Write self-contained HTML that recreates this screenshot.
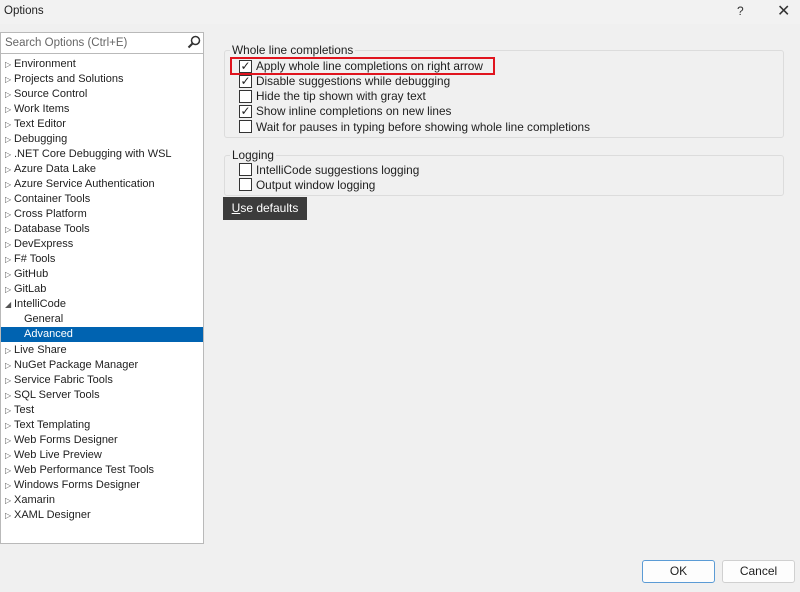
<!DOCTYPE html>
<html><head><style>
*{margin:0;padding:0;box-sizing:border-box}
body{width:800px;height:592px;background:#f0f0f0;font-family:"Liberation Sans",sans-serif;font-size:11.5px;color:#1e1e1e;position:relative;overflow:hidden}
.a{position:absolute;white-space:nowrap}
.title{left:0;top:0;width:800px;height:24px;background:#f2f2f2}
.tree{left:0;top:53px;width:204px;height:491px;background:#fff;border:1px solid #b9b9b9;font-size:11px}
.item{position:absolute;left:4px;height:15px;line-height:15px;top:1px}
.item i{font-style:normal;font-size:8px;color:#555;display:inline-block;width:9px}
.sel{position:absolute;left:0;width:202px;height:15px;background:#0063b1}
.cb{position:absolute;width:13px;height:13px;border:1px solid #333;background:#fff;font-size:12px;line-height:11px;text-align:center}
.grp{position:absolute;border:1px solid #dcdcdc;border-radius:3px}
.btn{position:absolute;height:23px;background:#fdfdfd;border:1px solid #d0d0d0;border-radius:3px;text-align:center;line-height:21px;font-size:12px}
.t{font-size:11.8px}
</style></head><body>
<div class="a title"></div>
<div class="a" style="left:4px;top:5px;font-size:11.5px">Options</div>
<div class="a" style="left:737px;top:4px;font-size:12px;color:#333">?</div>
<div class="a" style="left:777px;top:1px;font-size:16px;color:#333">✕</div>
<div class="a" style="left:0;top:32px;width:204px;height:22px;background:#fff;border:1px solid #b9b9b9"></div>
<div class="a" style="left:5px;top:37px;color:#666;font-size:11.5px">Search Options (Ctrl+E)</div>
<svg class="a" style="left:187px;top:35px" width="14" height="14"><circle cx="8.5" cy="5.5" r="4" fill="none" stroke="#333" stroke-width="1.5"/><line x1="5.5" y1="8.5" x2="1.5" y2="12.5" stroke="#333" stroke-width="2"/></svg>
<div class="a tree">
<div class="sel" style="top:273px"></div>
<div class="item" style="top:3px"><i>▷</i>Environment</div>
<div class="item" style="top:18px"><i>▷</i>Projects and Solutions</div>
<div class="item" style="top:33px"><i>▷</i>Source Control</div>
<div class="item" style="top:48px"><i>▷</i>Work Items</div>
<div class="item" style="top:63px"><i>▷</i>Text Editor</div>
<div class="item" style="top:78px"><i>▷</i>Debugging</div>
<div class="item" style="top:93px"><i>▷</i>.NET Core Debugging with WSL</div>
<div class="item" style="top:108px"><i>▷</i>Azure Data Lake</div>
<div class="item" style="top:123px"><i>▷</i>Azure Service Authentication</div>
<div class="item" style="top:138px"><i>▷</i>Container Tools</div>
<div class="item" style="top:153px"><i>▷</i>Cross Platform</div>
<div class="item" style="top:168px"><i>▷</i>Database Tools</div>
<div class="item" style="top:183px"><i>▷</i>DevExpress</div>
<div class="item" style="top:198px"><i>▷</i>F# Tools</div>
<div class="item" style="top:213px"><i>▷</i>GitHub</div>
<div class="item" style="top:228px"><i>▷</i>GitLab</div>
<div class="item" style="top:243px"><i>◢</i>IntelliCode</div>
<div class="item" style="top:258px;left:23px">General</div>
<div class="item" style="top:273px;left:23px;color:#fff">Advanced</div>
<div class="item" style="top:289px"><i>▷</i>Live Share</div>
<div class="item" style="top:304px"><i>▷</i>NuGet Package Manager</div>
<div class="item" style="top:319px"><i>▷</i>Service Fabric Tools</div>
<div class="item" style="top:334px"><i>▷</i>SQL Server Tools</div>
<div class="item" style="top:349px"><i>▷</i>Test</div>
<div class="item" style="top:364px"><i>▷</i>Text Templating</div>
<div class="item" style="top:379px"><i>▷</i>Web Forms Designer</div>
<div class="item" style="top:394px"><i>▷</i>Web Live Preview</div>
<div class="item" style="top:409px"><i>▷</i>Web Performance Test Tools</div>
<div class="item" style="top:424px"><i>▷</i>Windows Forms Designer</div>
<div class="item" style="top:439px"><i>▷</i>Xamarin</div>
<div class="item" style="top:454px"><i>▷</i>XAML Designer</div>
</div>
<div class="grp" style="left:224px;top:50px;width:560px;height:88px"></div>
<div class="a t" style="left:230px;top:43px;background:#f0f0f0;padding:0 2px">Whole line completions</div>
<div class="a" style="left:230px;top:57px;width:265px;height:18px;border:2px solid #e0141e"></div>
<div class="cb" style="left:239px;top:60px">✓</div><div class="a t" style="left:256px;top:59px">Apply whole line completions on right arrow</div>
<div class="cb" style="left:239px;top:75px">✓</div><div class="a t" style="left:256px;top:74px">Disable suggestions while debugging</div>
<div class="cb" style="left:239px;top:90px"></div><div class="a t" style="left:256px;top:89px">Hide the tip shown with gray text</div>
<div class="cb" style="left:239px;top:105px">✓</div><div class="a t" style="left:256px;top:104px">Show inline completions on new lines</div>
<div class="cb" style="left:239px;top:120px"></div><div class="a t" style="left:256px;top:120px">Wait for pauses in typing before showing whole line completions</div>
<div class="grp" style="left:224px;top:155px;width:560px;height:41px"></div>
<div class="a t" style="left:230px;top:148px;background:#f0f0f0;padding:0 2px">Logging</div>
<div class="cb" style="left:239px;top:163px"></div><div class="a t" style="left:256px;top:163px">IntelliCode suggestions logging</div>
<div class="cb" style="left:239px;top:178px"></div><div class="a t" style="left:256px;top:178px">Output window logging</div>
<div class="a" style="left:223px;top:197px;width:84px;height:23px;background:#3c3c3c;color:#fff;font-size:12px;line-height:23px;text-align:center"><u>U</u>se defaults</div>
<div class="btn" style="left:642px;top:560px;width:73px;border-color:#5b9bd5">OK</div>
<div class="btn" style="left:722px;top:560px;width:73px">Cancel</div>
</body></html>
